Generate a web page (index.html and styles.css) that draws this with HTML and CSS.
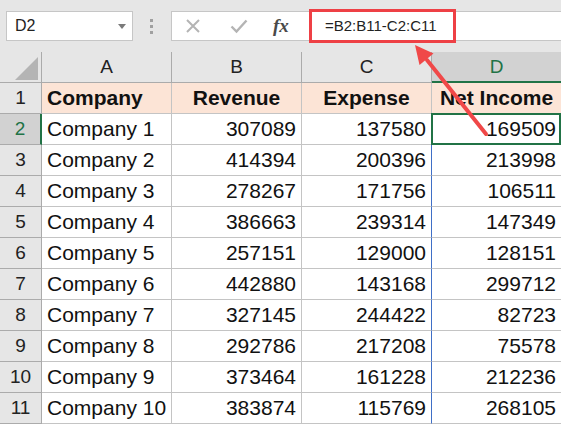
FILE: index.html
```html
<!DOCTYPE html>
<html lang="en">
<head>
  <meta charset="UTF-8">
  <title>Net Income</title>
  <link rel="stylesheet" href="styles.css">
</head>
<body>

  <!-- name box + formula bar -->
  <div class="toolbar">
    <div class="namebox">
      <span>D2</span>
      <span class="caret"></span>
    </div>
    <div class="grip"><i></i><i></i><i></i></div>
    <div class="fbar">
      <div class="fbtns">
        <svg class="ico-x" width="16" height="16" viewBox="0 0 16 16"><path d="M2 2L14 14M14 2L2 14" stroke="#b4b4b4" stroke-width="2" fill="none"/></svg>
        <svg class="ico-ok" width="18" height="16" viewBox="0 0 18 16"><path d="M1.5 8.5L6.5 13.5L16.5 2.5" stroke="#b4b4b4" stroke-width="2.4" fill="none"/></svg>
        <span class="fx">fx</span>
      </div>
      <div class="finput">=B2:B11-C2:C11</div>
    </div>
  </div>

  <!-- the sheet -->
  <div class="sheet">
    <div class="hd corner"><span class="tri"></span></div>
    <div class="hd">A</div>
    <div class="hd">B</div>
    <div class="hd">C</div>
    <div class="hd on-col">D</div>

    <div class="rh">1</div>
    <div class="c th txt">Company</div>
    <div class="c th">Revenue</div>
    <div class="c th">Expense</div>
    <div class="c th">Net Income</div>

    <div class="rh on-row">2</div>
    <div class="c txt">Company 1</div>
    <div class="c num">307089</div>
    <div class="c num">137580</div>
    <div class="c num sel">169509</div>

    <div class="rh">3</div>
    <div class="c txt">Company 2</div>
    <div class="c num">414394</div>
    <div class="c num brk">200396</div>
    <div class="c num">213998</div>

    <div class="rh">4</div>
    <div class="c txt">Company 3</div>
    <div class="c num">278267</div>
    <div class="c num brk">171756</div>
    <div class="c num">106511</div>

    <div class="rh">5</div>
    <div class="c txt">Company 4</div>
    <div class="c num">386663</div>
    <div class="c num brk">239314</div>
    <div class="c num">147349</div>

    <div class="rh">6</div>
    <div class="c txt">Company 5</div>
    <div class="c num">257151</div>
    <div class="c num brk">129000</div>
    <div class="c num">128151</div>

    <div class="rh">7</div>
    <div class="c txt">Company 6</div>
    <div class="c num">442880</div>
    <div class="c num brk">143168</div>
    <div class="c num">299712</div>

    <div class="rh">8</div>
    <div class="c txt">Company 7</div>
    <div class="c num">327145</div>
    <div class="c num brk">244422</div>
    <div class="c num">82723</div>

    <div class="rh">9</div>
    <div class="c txt">Company 8</div>
    <div class="c num">292786</div>
    <div class="c num brk">217208</div>
    <div class="c num">75578</div>

    <div class="rh">10</div>
    <div class="c txt">Company 9</div>
    <div class="c num">373464</div>
    <div class="c num brk">161228</div>
    <div class="c num">212236</div>

    <div class="rh">11</div>
    <div class="c txt">Company 10</div>
    <div class="c num">383874</div>
    <div class="c num brk">115769</div>
    <div class="c num">268105</div>
  </div>

  <!-- annotation arrow -->
  <svg class="arrow" width="561" height="424" viewBox="0 0 561 424">
    <line x1="486" y1="134" x2="427" y2="60" stroke="#f04848" stroke-width="4" stroke-linecap="round"/>
    <polygon points="415,45 433.5,53.5 419.5,65" fill="#f04848"/>
  </svg>

</body>
</html>
```

FILE: styles.css
```css
* {
  box-sizing: border-box;
}

body {
  margin: 0;
  width: 561px;
  height: 424px;
  overflow: hidden;
  position: relative;
  background: #fff;
  font-family: "Liberation Sans", Arial, sans-serif;
  color: #111;
}

/* top strip */
.toolbar {
  height: 52px;
  background: #e6e6e6;
  display: flex;
  align-items: center;
  padding-left: 6px;
}

.namebox {
  width: 127px;
  height: 30px;
  background: #fff;
  border: 1px solid #c6c6c6;
  display: flex;
  align-items: center;
  justify-content: space-between;
  padding: 0 6px 0 8px;
  font-size: 16px;
  color: #222;
}

.caret {
  width: 0;
  height: 0;
  border-left: 4px solid transparent;
  border-right: 4px solid transparent;
  border-top: 5px solid #7a7a7a;
}

.grip {
  margin-left: 17px;
  width: 4px;
  display: flex;
  flex-direction: column;
  gap: 3px;
}

.grip i {
  display: block;
  width: 3px;
  height: 3px;
  background: #a0a0a0;
}

.fbar {
  margin-left: 17px;
  flex: 1;
  height: 30px;
  background: #fff;
  border: 1px solid #c6c6c6;
  border-right: none;
  display: flex;
  align-items: center;
}

.fbtns {
  width: 137px;
  display: flex;
  align-items: center;
  padding-left: 13px;
}

.ico-ok {
  margin-left: 29px;
}

.fx {
  margin-left: 25px;
  font-family: "Liberation Serif", "Times New Roman", serif;
  font-style: italic;
  font-weight: bold;
  font-size: 19px;
  color: #4a4a4a;
}

/* red highlight around the formula */
.finput {
  width: 147px;
  height: 34px;
  flex: none;
  border: 3px solid #ee4045;
  padding-left: 13px;
  font-size: 15px;
  line-height: 28px;
  color: #222;
}

/* the grid */
.sheet {
  display: grid;
  grid-template-columns: 42px 130px 130px 130px 130px;
  grid-auto-rows: 31px;
}

.hd,
.rh {
  background: #e6e6e6;
  border-right: 1px solid #ababab;
  border-bottom: 1px solid #ababab;
  display: flex;
  align-items: center;
  justify-content: center;
  font-size: 19px;
  color: #222;
}

.corner {
  position: relative;
}

.tri {
  position: absolute;
  right: 3px;
  bottom: 2px;
  width: 0;
  height: 0;
  border-left: 23px solid transparent;
  border-bottom: 23px solid #b4b4b4;
}

.on-col {
  background: #d2d2d2;
  color: #217346;
  border-bottom: 2px solid #217346;
}

.on-row {
  background: #d2d2d2;
  color: #217346;
  border-right: 2px solid #217346;
}

.c {
  border-right: 1px solid #c4c4c4;
  border-bottom: 1px solid #c4c4c4;
  display: flex;
  align-items: center;
  font-size: 21px;
  white-space: nowrap;
}

.txt {
  padding-left: 5px;
}

.num {
  justify-content: flex-end;
  padding-right: 5px;
}

.th {
  background: #fce4d6;
  font-weight: bold;
  justify-content: center;
}

.th.txt {
  justify-content: flex-start;
}

.brk {
  border-right-color: #3f6fc6;
}

.sel {
  position: relative;
}

.sel::after {
  content: "";
  position: absolute;
  top: -1px;
  left: -1px;
  right: 0;
  bottom: -1px;
  border: 2px solid #217346;
}

.arrow {
  position: absolute;
  top: 0;
  left: 0;
  pointer-events: none;
}
```
